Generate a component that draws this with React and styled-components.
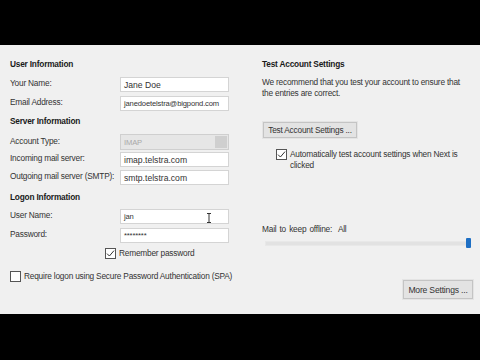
import React from "react";
import styled, { createGlobalStyle } from "styled-components";

const GlobalStyle = createGlobalStyle`
  html, body {
    margin: 0;
    padding: 0;
    background: #000;
  }
  body {
    font-family: "Liberation Sans", Arial, sans-serif;
  }
`;

const Screen = styled.div`
  width: 480px;
  height: 360px;
  display: flex;
  flex-direction: column;
  background: #000;
  overflow: hidden;
`;

const BlackBar = styled.div`
  height: ${(p) => p.$h}px;
  background: #000;
`;

const Dialog = styled.div`
  height: 269px;
  background: #f0f0f0;
  display: grid;
  grid-template-columns: 220px 211px;
  column-gap: 32px;
  padding: 0 0 0 10px;
  font-size: 8.3px;
  letter-spacing: -0.2px;
  color: #333;
`;

const Column = styled.div`
  display: flex;
  flex-direction: column;
  padding-top: 13px;
  position: relative;
`;

const Heading = styled.div`
  font-weight: 700;
  color: #1a1a1a;
  line-height: 12px;
  height: 12px;
  margin-top: ${(p) => p.$mt || 0}px;
`;

const Row = styled.div`
  display: grid;
  grid-template-columns: 110px 109px;
  align-items: center;
  height: ${(p) => p.$h || 15}px;
  margin-top: ${(p) => p.$mt || 0}px;
`;

const Label = styled.span`
  white-space: nowrap;
  line-height: 12px;
  margin-top: -3px;
`;

const Field = styled.div`
  position: relative;
  height: ${(p) => p.$h || 15}px;
  box-sizing: border-box;
  border: 1px solid ${(p) => (p.$disabled ? "#cfcfcf" : "#d4d4d4")};
  background: ${(p) => (p.$disabled ? "#e6e6e6" : "#fff")};
  color: ${(p) => (p.$disabled ? "#a8a8a8" : "#333")};
  padding-left: 3px;
  display: flex;
  align-items: center;
  font-size: ${(p) => (p.$small ? 7.6 : 8.6)}px;
  letter-spacing: ${(p) => (p.$small ? -0.15 : 0)}px;
  white-space: nowrap;
  overflow: hidden;
`;

const DropButton = styled.div`
  position: absolute;
  right: 1px;
  top: 1px;
  bottom: 1px;
  width: 12px;
  background: #cfcfcf;
`;

const Cursor = styled.svg`
  position: absolute;
  left: 85px;
  top: 3px;
`;

const CheckRow = styled.label`
  display: flex;
  align-items: flex-start;
  gap: 3px;
  margin-top: ${(p) => p.$mt || 0}px;
  margin-left: ${(p) => p.$ml || 0}px;
  line-height: 11px;
  font-size: ${(p) => p.$fs || 8.3}px;
  color: #333;
  white-space: nowrap;
`;

const Box = styled.span`
  flex: none;
  width: 11px;
  height: 11px;
  box-sizing: border-box;
  border: 1px solid #555;
  background: #fff;
  display: flex;
  align-items: center;
  justify-content: center;
`;

const Paragraph = styled.div`
  margin-top: 7px;
  line-height: 10.5px;
  color: #333;
  width: 200px;
`;

const Button = styled.div`
  box-sizing: border-box;
  width: ${(p) => p.$w}px;
  height: ${(p) => p.$h}px;
  margin-top: ${(p) => p.$mt || 0}px;
  margin-left: ${(p) => p.$ml || 0}px;
  align-self: ${(p) => p.$align || "flex-start"};
  border: 1px solid #c4c4c4;
  outline: 1px solid #e4e4e4;
  background: #e3e3e3;
  color: #333;
  display: flex;
  align-items: center;
  justify-content: center;
  white-space: nowrap;
  font-size: ${(p) => p.$fs || 8.3}px;
`;

const OfflineLabel = styled.div`
  margin-top: ${(p) => p.$mt}px;
  line-height: 12px;
  white-space: nowrap;
  word-spacing: 1px;
`;

const Slider = styled.div`
  position: relative;
  margin: 6px 0 0 3px;
  width: 203px;
  height: 3px;
  background: #e2e2e2;
  border: 1px solid #e8e8e8;
`;

const Thumb = styled.div`
  position: absolute;
  right: -2px;
  top: -4px;
  width: 5px;
  height: 10px;
  border-radius: 1px;
  background: #1e6fc4;
`;

function Check({ checked }) {
  return (
    <Box>
      {checked && (
        <svg width="9" height="9" viewBox="0 0 9 9">
          <path d="M1 4.6 L3.4 7 L8 1.6" fill="none" stroke="#333" strokeWidth="1" />
        </svg>
      )}
    </Box>
  );
}

export default function App() {
  return (
    <>
      <GlobalStyle />
      <Screen>
        <BlackBar $h={45} />
        <Dialog>
          <Column>
            <Heading>User Information</Heading>
            <Row $mt={7}>
              <Label>Your Name:</Label>
              <Field>Jane Doe</Field>
            </Row>
            <Row $mt={4}>
              <Label>Email Address:</Label>
              <Field $small>janedoetelstra@bigpond.com</Field>
            </Row>
            <Heading $mt={4}>Server Information</Heading>
            <Row $mt={7} $h={16}>
              <Label>Account Type:</Label>
              <Field $disabled $h={16} $small>
                IMAP
                <DropButton />
              </Field>
            </Row>
            <Row $mt={2}>
              <Label>Incoming mail server:</Label>
              <Field>imap.telstra.com</Field>
            </Row>
            <Row $mt={3}>
              <Label>Outgoing mail server (SMTP):</Label>
              <Field>smtp.telstra.com</Field>
            </Row>
            <Heading $mt={6}>Logon Information</Heading>
            <Row $mt={6}>
              <Label>User Name:</Label>
              <Field $small>
                jan
                <Cursor width="6" height="10" viewBox="0 0 6 10">
                  <path d="M1 0.5 H5 M3 0.5 V9.5 M1 9.5 H5" stroke="#333" strokeWidth="1" fill="none" />
                </Cursor>
              </Field>
            </Row>
            <Row $mt={4}>
              <Label>Password:</Label>
              <Field $small>********</Field>
            </Row>
            <CheckRow $mt={5} $ml={95}>
              <Check checked />
              Remember password
            </CheckRow>
            <CheckRow $mt={12}>
              <Check />
              Require logon using Secure Password Authentication (SPA)
            </CheckRow>
          </Column>
          <Column>
            <Heading>Test Account Settings</Heading>
            <Paragraph>
              We recommend that you test your account to ensure that the entries are correct.
            </Paragraph>
            <Button $w={94} $h={16} $mt={24} $ml={1}>
              Test Account Settings ...
            </Button>
            <CheckRow $mt={11} $ml={14}>
              <Check checked />
              <span>
                Automatically test account settings when Next is
                <br />
                clicked
              </span>
            </CheckRow>
            <OfflineLabel $mt={52}>Mail to keep offline:&nbsp; All</OfflineLabel>
            <Slider>
              <Thumb />
            </Slider>
            <Button $w={70} $h={19} $mt={34} $align="flex-end" $fs={8.6}>
              More Settings ...
            </Button>
          </Column>
        </Dialog>
        <BlackBar $h={46} />
      </Screen>
    </>
  );
}
